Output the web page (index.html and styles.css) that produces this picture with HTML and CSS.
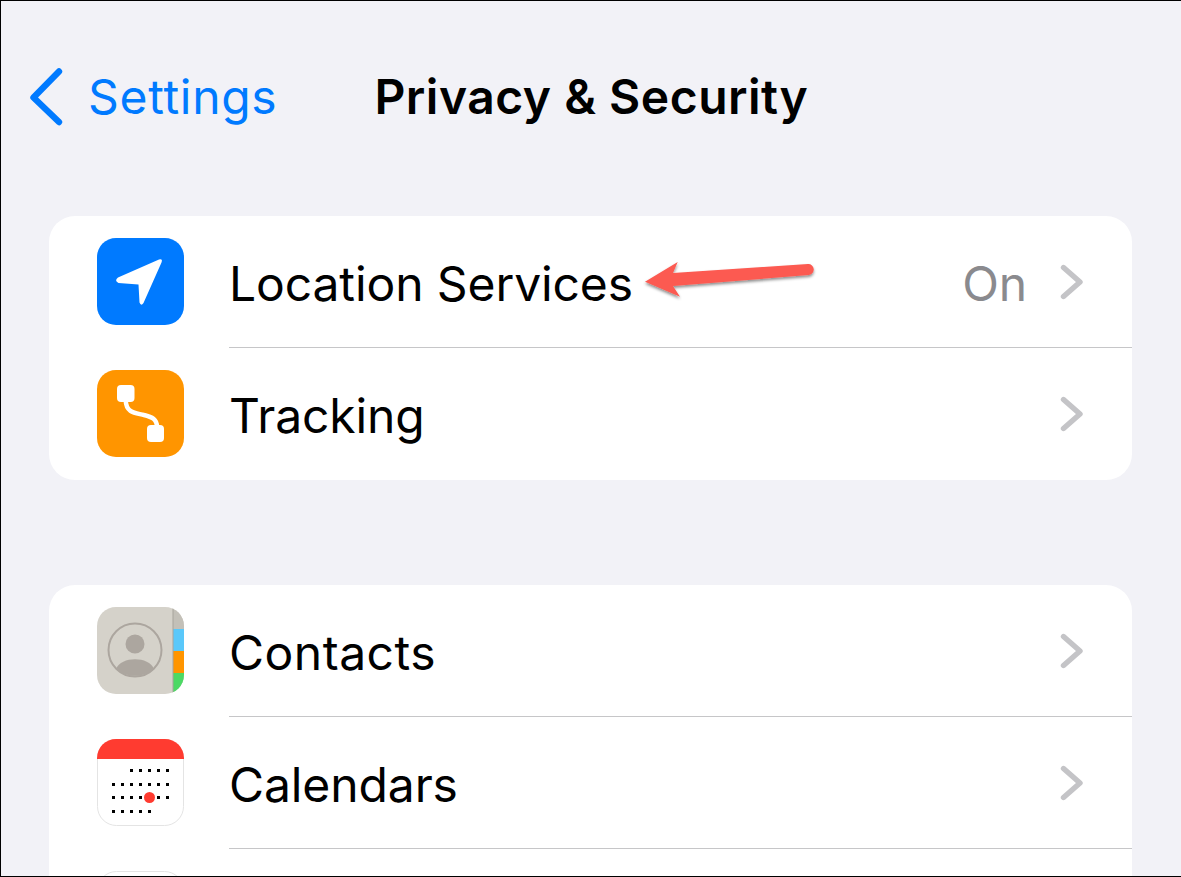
FILE: index.html
```html
<!DOCTYPE html>
<html lang="en">
<head>
<meta charset="utf-8">
<title>Privacy &amp; Security</title>
<link rel="stylesheet" href="styles.css">
</head>
<body>
<div class="screen">
  <header class="nav">
    <svg class="back-icon" width="36" height="60" viewBox="0 0 36 60"><path d="M32 3.500 L6.500 29.500 L32 54" fill="none" stroke="#007aff" stroke-width="6.400" stroke-linecap="round" stroke-linejoin="round"/></svg>
    <span class="back-label">Settings</span>
    <h1 class="title">Privacy &amp; Security</h1>
  </header>

  <section class="card">
    <div class="row">
      <svg class="icon" viewBox="0 0 87 87"><rect width="87" height="87" rx="19" fill="#007aff"/><path d="M21 39.500 L62 21.500 Q66 20.500 64.500 24.500 L46.500 65 Q44 68.500 42.500 64.500 L41.500 46.500 L21.500 45 Q17 42.500 21 39.500Z" fill="#fff"/></svg>
      <div class="row-body"><span class="label">Location Services</span><span class="value">On</span><svg class="chev" width="24" height="36" viewBox="0 0 24 36"><path d="M3.500 3.500 L20 18 L3.500 32.500" fill="none" stroke="#c4c4c7" stroke-width="5.400" stroke-linecap="round" stroke-linejoin="round"/></svg></div>
    </div>
    <div class="row">
      <svg class="icon" viewBox="0 0 87 87"><rect width="87" height="87" rx="19" fill="#ff9500"/><path d="M28.700 30 C29 44 40 43 47 45 C55 47 60 49 60 57" fill="none" stroke="#fff" stroke-width="4.500"/><rect x="20" y="15" width="17.500" height="17" rx="4" fill="#fff"/><rect x="50" y="55" width="17" height="17" rx="4" fill="#fff"/></svg>
      <div class="row-body"><span class="label">Tracking</span><svg class="chev" width="24" height="36" viewBox="0 0 24 36"><path d="M3.500 3.500 L20 18 L3.500 32.500" fill="none" stroke="#c4c4c7" stroke-width="5.400" stroke-linecap="round" stroke-linejoin="round"/></svg></div>
    </div>
  </section>

  <section class="card card-second">
    <div class="row">
      <svg class="icon" viewBox="0 0 87 87"><defs><clipPath id="sq"><rect width="87" height="87" rx="19"/></clipPath></defs><g clip-path="url(#sq)"><rect width="87" height="87" fill="#d5d2ca"/><rect x="76" width="11" height="22" fill="#c3c0b8"/><rect x="76" y="22" width="11" height="22" fill="#5ac8fa"/><rect x="76" y="44" width="11" height="22" fill="#ff9500"/><rect x="76" y="66" width="11" height="21" fill="#4cd964"/><rect x="75.500" width="1" height="87" fill="#a8a49c"/><circle cx="38" cy="43" r="26.500" fill="none" stroke="#aca69f" stroke-width="2"/><circle cx="38" cy="37" r="9.500" fill="#aca69f"/><path d="M19 62 C24 49 52 49 57 62 C47 71 29 71 19 62Z" fill="#aca69f"/></g></svg>
      <div class="row-body"><span class="label label-wide">Contacts</span><svg class="chev" width="24" height="36" viewBox="0 0 24 36"><path d="M3.500 3.500 L20 18 L3.500 32.500" fill="none" stroke="#c4c4c7" stroke-width="5.400" stroke-linecap="round" stroke-linejoin="round"/></svg></div>
    </div>
    <div class="row">
      <svg class="icon" viewBox="0 0 87 87"><defs><clipPath id="sq2"><rect width="87" height="87" rx="19"/></clipPath></defs><rect x=".5" y=".5" width="86" height="86" rx="19" fill="#fff" stroke="#e4e4e4"/><g clip-path="url(#sq2)"><rect width="87" height="20" fill="#ff3b30"/></g><g class="cal-dots"><rect x="33" y="30" width="3" height="3"/><rect x="42" y="30" width="3" height="3"/><rect x="51" y="30" width="3" height="3"/><rect x="60" y="30" width="3" height="3"/><rect x="69" y="30" width="3" height="3"/><rect x="15" y="44" width="3" height="3"/><rect x="24" y="44" width="3" height="3"/><rect x="33" y="44" width="3" height="3"/><rect x="42" y="44" width="3" height="3"/><rect x="51" y="44" width="3" height="3"/><rect x="60" y="44" width="3" height="3"/><rect x="69" y="44" width="3" height="3"/><rect x="15" y="57" width="3" height="3"/><rect x="24" y="57" width="3" height="3"/><rect x="33" y="57" width="3" height="3"/><rect x="42" y="57" width="3" height="3"/><rect x="60" y="57" width="3" height="3"/><rect x="69" y="57" width="3" height="3"/><rect x="15" y="71" width="3" height="3"/><rect x="24" y="71" width="3" height="3"/><rect x="33" y="71" width="3" height="3"/><rect x="42" y="71" width="3" height="3"/><rect x="51" y="71" width="3" height="3"/></g><circle cx="52.500" cy="58.500" r="5.500" fill="#ff3b30"/></svg>
      <div class="row-body"><span class="label">Calendars</span><svg class="chev" width="24" height="36" viewBox="0 0 24 36"><path d="M3.500 3.500 L20 18 L3.500 32.500" fill="none" stroke="#c4c4c7" stroke-width="5.400" stroke-linecap="round" stroke-linejoin="round"/></svg></div>
    </div>
    <div class="row">
      <svg class="icon" viewBox="0 0 87 87"><rect x=".5" y=".5" width="86" height="86" rx="19" fill="#fff" stroke="#e4e4e4"/></svg>
      <div class="row-body"></div>
    </div>
  </section>

  <svg class="arrow" width="190" height="56" viewBox="0 0 190 56"><defs><filter id="sh" x="-10%" y="-30%" width="120%" height="170%"><feDropShadow dx="0" dy="2" stdDeviation="1.500" flood-color="#000" flood-opacity=".45"/></filter></defs><path d="M5 32.700 L37.700 13 L33 24 L168 15 A5.500 5.500 0 0 1 168.500 26 L33 37 L40 47.700 Z" fill="#fc5a51" filter="url(#sh)"/></svg>
</div>
</body>
</html>
```
FILE: styles.css
```css
* { box-sizing: border-box; }
html, body { margin: 0; padding: 0; }
body { width: 1181px; height: 877px; overflow: hidden; font-family: Inter, "Liberation Sans", sans-serif; }
.screen { position: relative; width: 1181px; height: 877px; overflow: hidden; background: #f2f2f7; border: 1px solid #000; border-right-width: 0; padding: 67px 49px 0 48px; }
.nav { display: flex; align-items: center; height: 60px; margin-left: -21px; }
.back-icon { flex: none; margin-left: -1px; }
.back-label { margin-left: 25px; font-size: 48px; letter-spacing: .7px; color: #007aff; line-height: 56px; margin-top: -3px; }
.title { margin: -3px 0 0 97px; font-size: 48px; line-height: 56px; font-weight: 600; letter-spacing: .5px; color: #000; }
.card { margin-top: 88px; background: #fff; border-radius: 26px; overflow: hidden; }
.card-second { margin-top: 105px; }
.row { display: flex; align-items: center; height: 132px; padding-left: 48px; }
.icon { flex: none; width: 87px; height: 87px; margin-bottom: 1px; }
.row-body { flex: 1; align-self: stretch; display: flex; align-items: center; margin-left: 45px; padding: 0 48px 0 0; border-bottom: 1px solid #c6c6c8; }
.row:last-child .row-body { border-bottom: 0; }
.label { flex: 1; font-size: 48px; letter-spacing: -.1px; color: #000; margin-top: 3px; }
.label-wide { letter-spacing: .5px; }
.value { font-size: 48px; letter-spacing: -.1px; color: #8a8a8e; margin: 3px 33px 0 0; }
.chev { flex: none; }
.cal-dots { fill: #000; }
.arrow { position: absolute; left: 639px; top: 248px; }
```
